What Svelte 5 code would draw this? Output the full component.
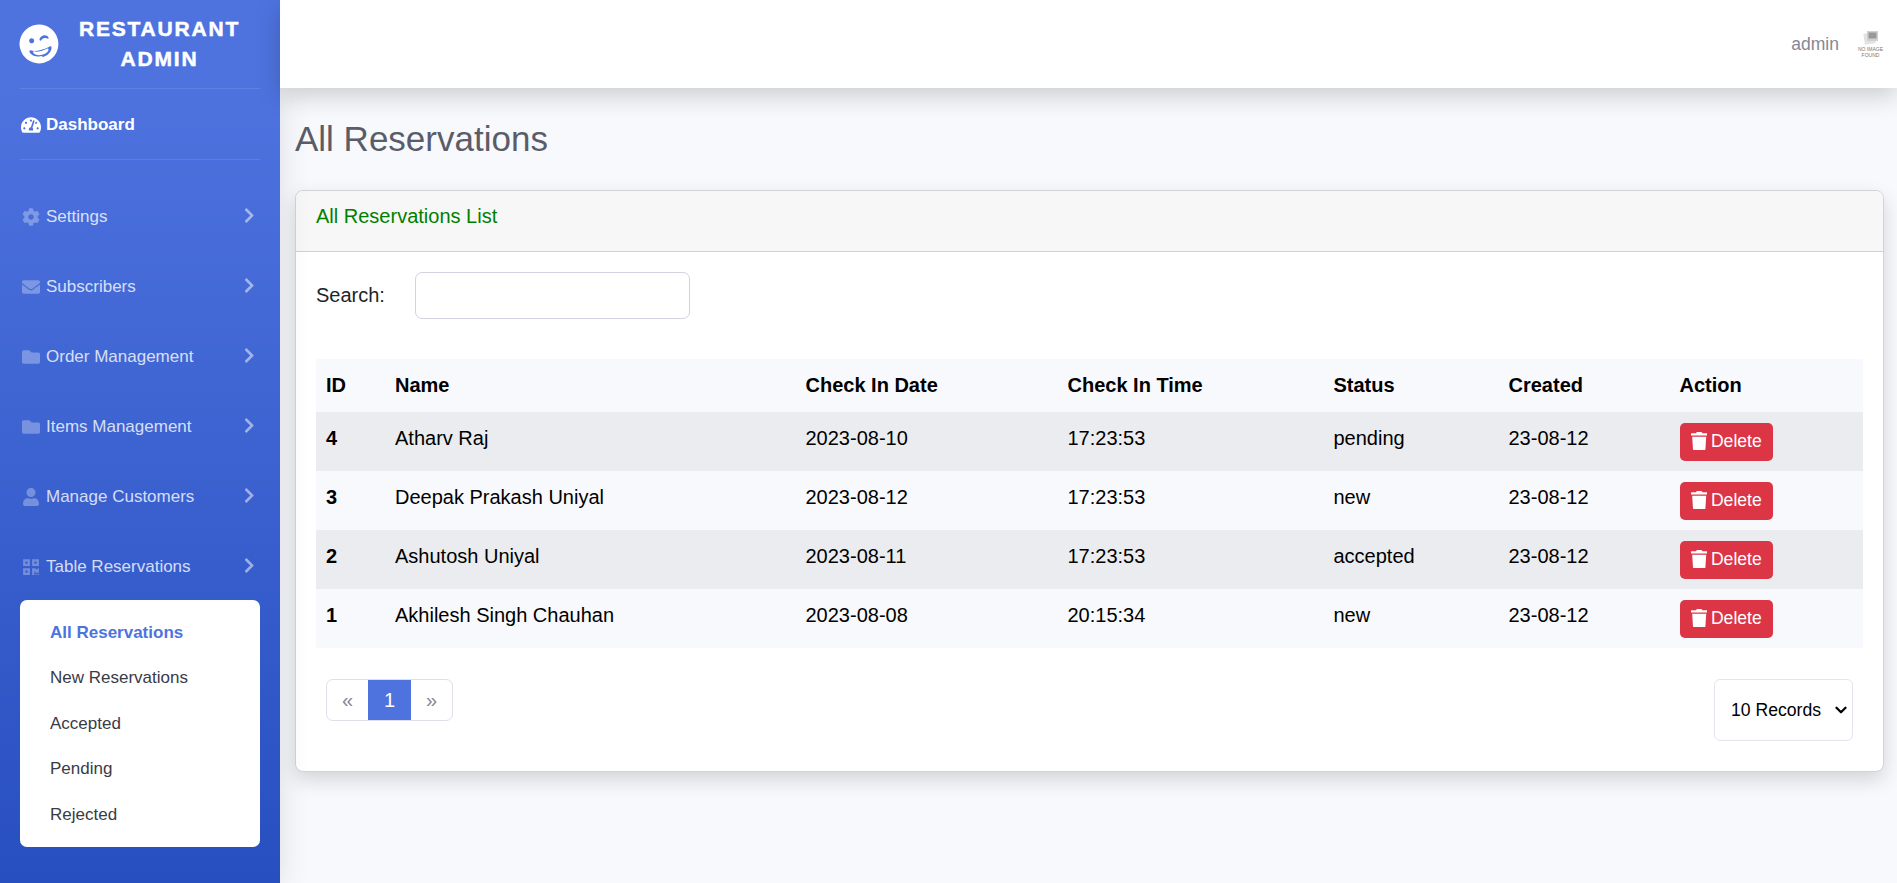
<script>
  const icons = {
    gear: { vb: '0 0 512 512', d: 'M487.4 315.7l-42.6-24.6c4.3-23.2 4.3-47 0-70.2l42.6-24.6c4.9-2.8 7.1-8.6 5.5-14-11.1-35.6-30-67.8-54.7-94.6-3.8-4.1-10-5.1-14.8-2.3L380.8 110c-17.9-15.4-38.5-27.3-60.8-35.1V25.8c0-5.6-3.9-10.5-9.4-11.7-36.7-8.2-74.3-7.8-109.2 0-5.5 1.2-9.4 6.1-9.4 11.7V75c-22.2 7.9-42.8 19.8-60.8 35.1L88.7 85.5c-4.9-2.8-11-1.9-14.8 2.3-24.7 26.7-43.6 58.9-54.7 94.6-1.7 5.4.6 11.2 5.5 14L67.3 221c-4.3 23.2-4.3 47 0 70.2l-42.6 24.6c-4.9 2.8-7.1 8.6-5.5 14 11.1 35.6 30 67.8 54.7 94.6 3.8 4.1 10 5.1 14.8 2.3l42.6-24.6c17.9 15.4 38.5 27.3 60.8 35.1v49.2c0 5.6 3.9 10.5 9.4 11.7 36.7 8.2 74.3 7.8 109.2 0 5.5-1.2 9.4-6.1 9.4-11.7v-49.2c22.2-7.9 42.8-19.8 60.8-35.1l42.6 24.6c4.9 2.8 11 1.9 14.8-2.3 24.7-26.7 43.6-58.9 54.7-94.6 1.5-5.5-.7-11.3-5.6-14.1zM256 336c-44.1 0-80-35.9-80-80s35.9-80 80-80 80 35.9 80 80-35.9 80-80 80z' },
    mail: { vb: '0 0 512 512', d: 'M502.3 190.8c3.9-3.1 9.7-.2 9.7 4.7V400c0 26.5-21.5 48-48 48H48c-26.5 0-48-21.5-48-48V195.6c0-5 5.7-7.8 9.7-4.7 22.4 17.4 52.1 39.5 154.1 113.6 21.1 15.4 56.7 47.8 92.2 47.6 35.7.3 72-32.8 92.3-47.6 102-74.1 131.6-96.3 154-113.7zM256 320c23.2.4 56.6-29.2 73.4-41.4 132.7-96.3 142.8-104.7 173.4-128.7 5.8-4.5 9.2-11.5 9.2-18.9v-19c0-26.5-21.5-48-48-48H48C21.5 64 0 85.5 0 112v19c0 7.4 3.4 14.3 9.2 18.9 30.6 23.9 40.7 32.4 173.4 128.7 16.8 12.2 50.2 41.8 73.4 41.4z' },
    folder: { vb: '0 0 512 512', d: 'M464 128H272l-64-64H48C21.49 64 0 85.49 0 112v288c0 26.51 21.49 48 48 48h416c26.51 0 48-21.49 48-48V176c0-26.51-21.49-48-48-48z' },
    user: { vb: '0 0 448 512', d: 'M224 256c70.7 0 128-57.3 128-128S294.7 0 224 0 96 57.3 96 128s57.3 128 128 128zm89.6 32h-16.7c-22.2 10.2-46.9 16-72.9 16s-50.6-5.8-72.9-16h-16.7C60.2 288 0 348.2 0 422.4V464c0 26.5 21.5 48 48 48h352c26.5 0 48-21.5 48-48v-41.6c0-74.2-60.2-134.4-134.4-134.4z' },
    qr: { vb: '0 0 448 512', d: 'M0 224h192V32H0v192zM64 96h64v64H64V96zm192-64v192h192V32H256zm128 128h-64V96h64v64zM0 480h192V288H0v192zm64-128h64v64H64v-64zm352-64h32v128h-96v-32h-32v96h-64V288h96v32h64v-32zm0 160h32v32h-32v-32zm-64 0h32v32h-32v-32z' }
  };
  const chevron = 'M285.476 272.971L91.132 467.314c-9.373 9.373-24.569 9.373-33.941 0l-22.667-22.667c-9.357-9.357-9.375-24.522-.04-33.901L188.505 256 34.484 101.255c-9.335-9.379-9.317-24.544.04-33.901l22.667-22.667c9.373-9.373 24.569-9.373 33.941 0L285.475 239.03c9.373 9.372 9.373 24.568.001 33.941z';
  const trash = 'M432 32H312l-9.4-18.7A24 24 0 0 0 281.1 0H166.8a23.72 23.72 0 0 0-21.4 13.3L136 32H16A16 16 0 0 0 0 48v32a16 16 0 0 0 16 16h416a16 16 0 0 0 16-16V48a16 16 0 0 0-16-16zM53.2 467a48 48 0 0 0 47.9 45h245.8a48 48 0 0 0 47.9-45L416 128H32z';
  const nav = [
    ['gear', 'Settings'], ['mail', 'Subscribers'], ['folder', 'Order Management'],
    ['folder', 'Items Management'], ['user', 'Manage Customers'], ['qr', 'Table Reservations']
  ];
  const sub = ['New Reservations', 'Accepted', 'Pending', 'Rejected'];
  const rows = [
    [4, 'Atharv Raj', '2023-08-10', '17:23:53', 'pending', '23-08-12'],
    [3, 'Deepak Prakash Uniyal', '2023-08-12', '17:23:53', 'new', '23-08-12'],
    [2, 'Ashutosh Uniyal', '2023-08-11', '17:23:53', 'accepted', '23-08-12'],
    [1, 'Akhilesh Singh Chauhan', '2023-08-08', '20:15:34', 'new', '23-08-12']
  ];
</script>

<div class="layout">
  <aside class="sidebar">
    <div class="brand">
      <svg class="logo" viewBox="0 0 496 512"><path fill="#fff" d="M248 8C111 8 0 119 0 256s111 248 248 248 248-111 248-248S385 8 248 8zm20.1 198.1c4-25.2 34.2-42.1 59.9-42.1s55.9 16.9 59.9 42.1c1.7 11.1-11.4 18.3-19.8 10.8l-9.5-8.5c-14.8-13.2-46.2-13.2-61 0L288 217c-8.4 7.4-21.6.3-19.9-10.9zM168 160c17.7 0 32 14.3 32 32s-14.3 32-32 32-32-14.3-32-32 14.3-32 32-32zm80 256c-60.6 0-134.5-38.3-143.8-93.3-2-11.9 9.4-21.6 20.7-17.9C155.1 330.5 200 336 248 336s92.9-5.5 123.1-15.2c11.5-3.7 22.6 6.1 20.7 17.9-9.3 55-83.2 93.3-143.8 93.3z"/><path fill="#fff" transform="translate(248 372) scale(.7 .62) translate(-248 -372)" d="M248 416c-60.6 0-134.5-38.3-143.8-93.3-2-11.9 9.4-21.6 20.7-17.9C155.1 330.5 200 336 248 336s92.9-5.5 123.1-15.2c11.5-3.7 22.6 6.1 20.7 17.9-9.3 55-83.2 77.3-143.8 77.3z"/></svg>
      <div class="brand-text">RESTAURANT ADMIN</div>
    </div>
    <hr />
    <div class="dash">
      <svg viewBox="0 0 576 512"><path fill="#fff" d="M288 32C128.94 32 0 160.94 0 320c0 52.8 14.25 102.26 39.06 144.8 5.61 9.62 16.3 15.2 27.44 15.2h443c11.14 0 21.83-5.58 27.44-15.2C561.75 422.26 576 372.8 576 320c0-159.06-128.94-288-288-288zm0 64c14.71 0 26.58 10.13 30.32 23.65-1.11 2.26-2.64 4.23-3.45 6.67l-9.22 27.67c-5.13 3.49-10.97 6.01-17.64 6.01-17.67 0-32-14.33-32-32S270.33 96 288 96zM96 384c-17.67 0-32-14.33-32-32s14.33-32 32-32 32 14.33 32 32-14.33 32-32 32zm48-160c-17.67 0-32-14.33-32-32s14.33-32 32-32 32 14.33 32 32-14.33 32-32 32zm246.77-72.41l-61.33 184C343.13 347.33 352 364.54 352 384c0 11.72-3.38 22.55-8.88 32H232.88c-5.5-9.45-8.88-20.28-8.88-32 0-33.94 26.5-61.43 59.9-63.59l61.34-184.01c4.17-12.56 17.73-19.45 30.36-15.17 12.57 4.19 19.35 17.79 15.17 30.36zm14.66 57.2l15.52-46.55c3.47-1.29 7.13-2.23 11.05-2.23 17.67 0 32 14.33 32 32s-14.33 32-32 32c-11.38-.01-20.89-6.28-26.57-15.22zM480 384c-17.67 0-32-14.33-32-32s14.33-32 32-32 32 14.33 32 32-14.33 32-32 32z"/></svg>
      <span>Dashboard</span>
    </div>
    <hr />
    <nav class="nav">
      {#each nav as [icon, label]}
        <div class="nav-item">
          <svg class="nav-icon" viewBox={icons[icon].vb}><path d={icons[icon].d} /></svg>
          <span class="nav-label">{label}</span>
          <svg class="chev" viewBox="0 0 320 512"><path d={chevron} /></svg>
        </div>
      {/each}
    </nav>
    <div class="submenu">
      <div class="sub active">All Reservations</div>
      {#each sub as s}<div class="sub">{s}</div>{/each}
    </div>
  </aside>

  <div class="main">
    <header class="topbar">
      <span class="admin">admin</span>
      <div class="noimg">
        <svg viewBox="0 0 16 15"><rect x="1" y="3" width="11" height="11" fill="#e2e2e2" transform="rotate(-8 6 8)" /><rect x="4" y="1" width="11" height="10" fill="#d0d0d0" /><rect x="5.5" y="2.5" width="8" height="6" fill="#999" /></svg>
        <span>NO IMAGE<br />FOUND</span>
      </div>
    </header>
    <main class="content">
      <h1>All Reservations</h1>
      <section class="card">
        <div class="card-head">All Reservations List</div>
        <div class="card-body">
          <div class="search">
            <label for="q">Search:</label>
            <input id="q" type="text" />
          </div>
          <table>
            <thead>
              <tr>
                <th class="c1">ID</th><th class="c2">Name</th><th class="c3">Check In Date</th><th class="c4">Check In Time</th><th class="c5">Status</th><th class="c6">Created</th><th class="c7">Action</th>
              </tr>
            </thead>
            <tbody>
              {#each rows as r}
                <tr>
                  <td class="id">{r[0]}</td><td>{r[1]}</td><td>{r[2]}</td><td>{r[3]}</td><td>{r[4]}</td><td>{r[5]}</td>
                  <td class="act"><button class="del"><svg viewBox="0 0 448 512"><path fill="#fff" d={trash} /></svg>Delete</button></td>
                </tr>
              {/each}
            </tbody>
          </table>
          <div class="foot">
            <div class="pager">
              <span class="pg">«</span><span class="pg on">1</span><span class="pg">»</span>
            </div>
            <div class="records-wrap">
              <select class="records"><option>10 Records</option></select>
              <svg class="sel-arrow" viewBox="0 0 16 16"><path fill="none" stroke="#000" stroke-width="3" stroke-linecap="round" stroke-linejoin="round" d="M2 5l6 6 6-6" /></svg>
            </div>
          </div>
        </div>
      </section>
    </main>
  </div>
</div>

<style>
  :global(body) { margin: 0; background: #f8f9fc; font-family: "Liberation Sans", Arial, sans-serif; }
  .layout { display: flex; height: 883px; overflow: hidden; }
  .sidebar { position: relative; z-index: 1; width: 280px; flex: none; box-sizing: border-box; padding: 0 20px; background: linear-gradient(180deg, #4e73df 10%, #284fc0 100%); color: #fff; box-shadow: 0 2px 28px rgba(58,59,69,.15); }
  .brand { height: 88px; display: flex; align-items: center; }
  .logo { width: 40px; height: 40px; flex: none; transform: rotate(-15deg); margin-left: -1px; }
  .brand-text { flex: 1; text-align: center; font-weight: 800; font-size: 21px; line-height: 30px; letter-spacing: 1.8px; -webkit-text-stroke: .5px #fff; }
  hr { margin: 0; border: 0; border-top: 1px solid rgba(255,255,255,.1); }
  .dash { height: 70px; display: flex; align-items: center; gap: 5px; font-size: 17px; font-weight: 700; margin-left: 1px; padding-top: 2px; box-sizing: border-box; }
  .dash svg { width: 20px; height: 18px; margin-top: -1px; }
  .nav { margin-top: 22px; }
  .nav-item { height: 70px; display: flex; align-items: center; color: rgba(255,255,255,.8); font-size: 17px; }
  .nav-icon { width: 18px; height: 18px; fill: rgba(255,255,255,.3); margin: 0 6px 0 2px; }
  .nav-label { flex: 1; }
  .chev { width: 10.6px; height: 17px; fill: rgba(255,255,255,.5); margin: -4px 5px 0 0; }
  .submenu { margin-top: -2px; background: #fff; border-radius: 7px; height: 247px; padding: 9.5px 0 0; box-sizing: border-box; color: #3a3b45; font-size: 17px; }
  .sub { height: 45.5px; line-height: 45.5px; padding-left: 30px; }
  .sub.active { color: #4e73df; font-weight: 700; }
  .main { flex: 1; min-width: 0; }
  .topbar { height: 88px; background: #fff; box-shadow: 0 8px 24px rgba(0,0,0,.18); display: flex; align-items: center; justify-content: flex-end; position: relative; z-index: 2; }
  .admin { color: #858796; font-size: 17.5px; margin-right: 16.5px; }
  .noimg { width: 30px; margin-right: 11.5px; display: flex; flex-direction: column; align-items: center; color: #777; font-size: 5px; line-height: 6px; text-align: center; white-space: nowrap; }
  .noimg svg { width: 16px; height: 15px; margin-bottom: 1px; }
  .content { padding: 0 13px 0 15px; }
  h1 { margin: 0; padding-top: 26px; height: 102px; box-sizing: border-box; font-weight: 400; font-size: 35px; line-height: 50px; color: #5a5c69; }
  .card { background: #fff; border: 1px solid #d1d3da; border-radius: 8px; box-shadow: 0 8px 20px rgba(0,0,0,.15); height: 582px; box-sizing: border-box; }
  .card-head { height: 61px; box-sizing: border-box; background: #f7f7f7; border-bottom: 1px solid #cfd1d6; border-radius: 7px 7px 0 0; padding: 13px 20px; color: green; font-size: 20px; line-height: 24px; }
  .card-body { padding: 20px; }
  .search { display: flex; align-items: center; height: 47px; color: #212529; font-size: 20px; }
  .search label { width: 99px; }
  input { width: 275px; height: 47px; box-sizing: border-box; border: 1px solid #d1d3e2; border-radius: 7px; background: #fff; }
  table { width: 100%; margin-top: 40px; border-collapse: collapse; table-layout: fixed; color: #000; font-size: 20px; }
  th { height: 53px; text-align: left; padding: 0 10px; font-weight: 700; background: #f8f9fc; }
  td { box-sizing: border-box; padding: 0 10px 7px; height: 59px; }
  td.act { padding-bottom: 0; }
  tbody tr:nth-child(odd) td { background: #ebecef; }
  tbody tr:nth-child(even) td { background: #f8f9fc; }
  .id { font-weight: 700; }
  .c1 { width: 49px; } .c2 { width: 390.5px; } .c3 { width: 242px; } .c4 { width: 246px; } .c5 { width: 155px; } .c6 { width: 151px; }
  .del { display: inline-flex; align-items: center; gap: 4px; width: 93px; height: 38px; padding: 0 11px; box-sizing: border-box; border: 0; border-radius: 5px; background: #dc3545; color: #fff; font: 400 17.6px "Liberation Sans", Arial, sans-serif; white-space: nowrap; vertical-align: middle; }
  .del svg { width: 16.4px; height: 18.7px; flex: none; margin-top: -1px; }
  .foot { display: flex; justify-content: space-between; align-items: flex-start; margin-top: 31px; padding: 0 10px; }
  .pager { display: flex; height: 42px; box-sizing: border-box; border: 1px solid #dddfeb; border-radius: 7px; overflow: hidden; color: #858796; font-size: 20px; }
  .pg { width: 41px; display: flex; align-items: center; justify-content: center; }
  .pg.on { width: 43px; background: #4e73df; color: #fff; margin-top: -1px; margin-bottom: -1px; }
  .records-wrap { position: relative; width: 139px; height: 62px; }
  .records { appearance: none; -webkit-appearance: none; width: 139px; height: 62px; box-sizing: border-box; padding: 0 0 0 16px; border: 1px solid #e3e6f0; border-radius: 6px; background: #fff; color: #000; font: 400 17.6px "Liberation Sans", Arial, sans-serif; }
  .sel-arrow { position: absolute; right: 6px; top: 25px; width: 12px; height: 12px; pointer-events: none; }
</style>
